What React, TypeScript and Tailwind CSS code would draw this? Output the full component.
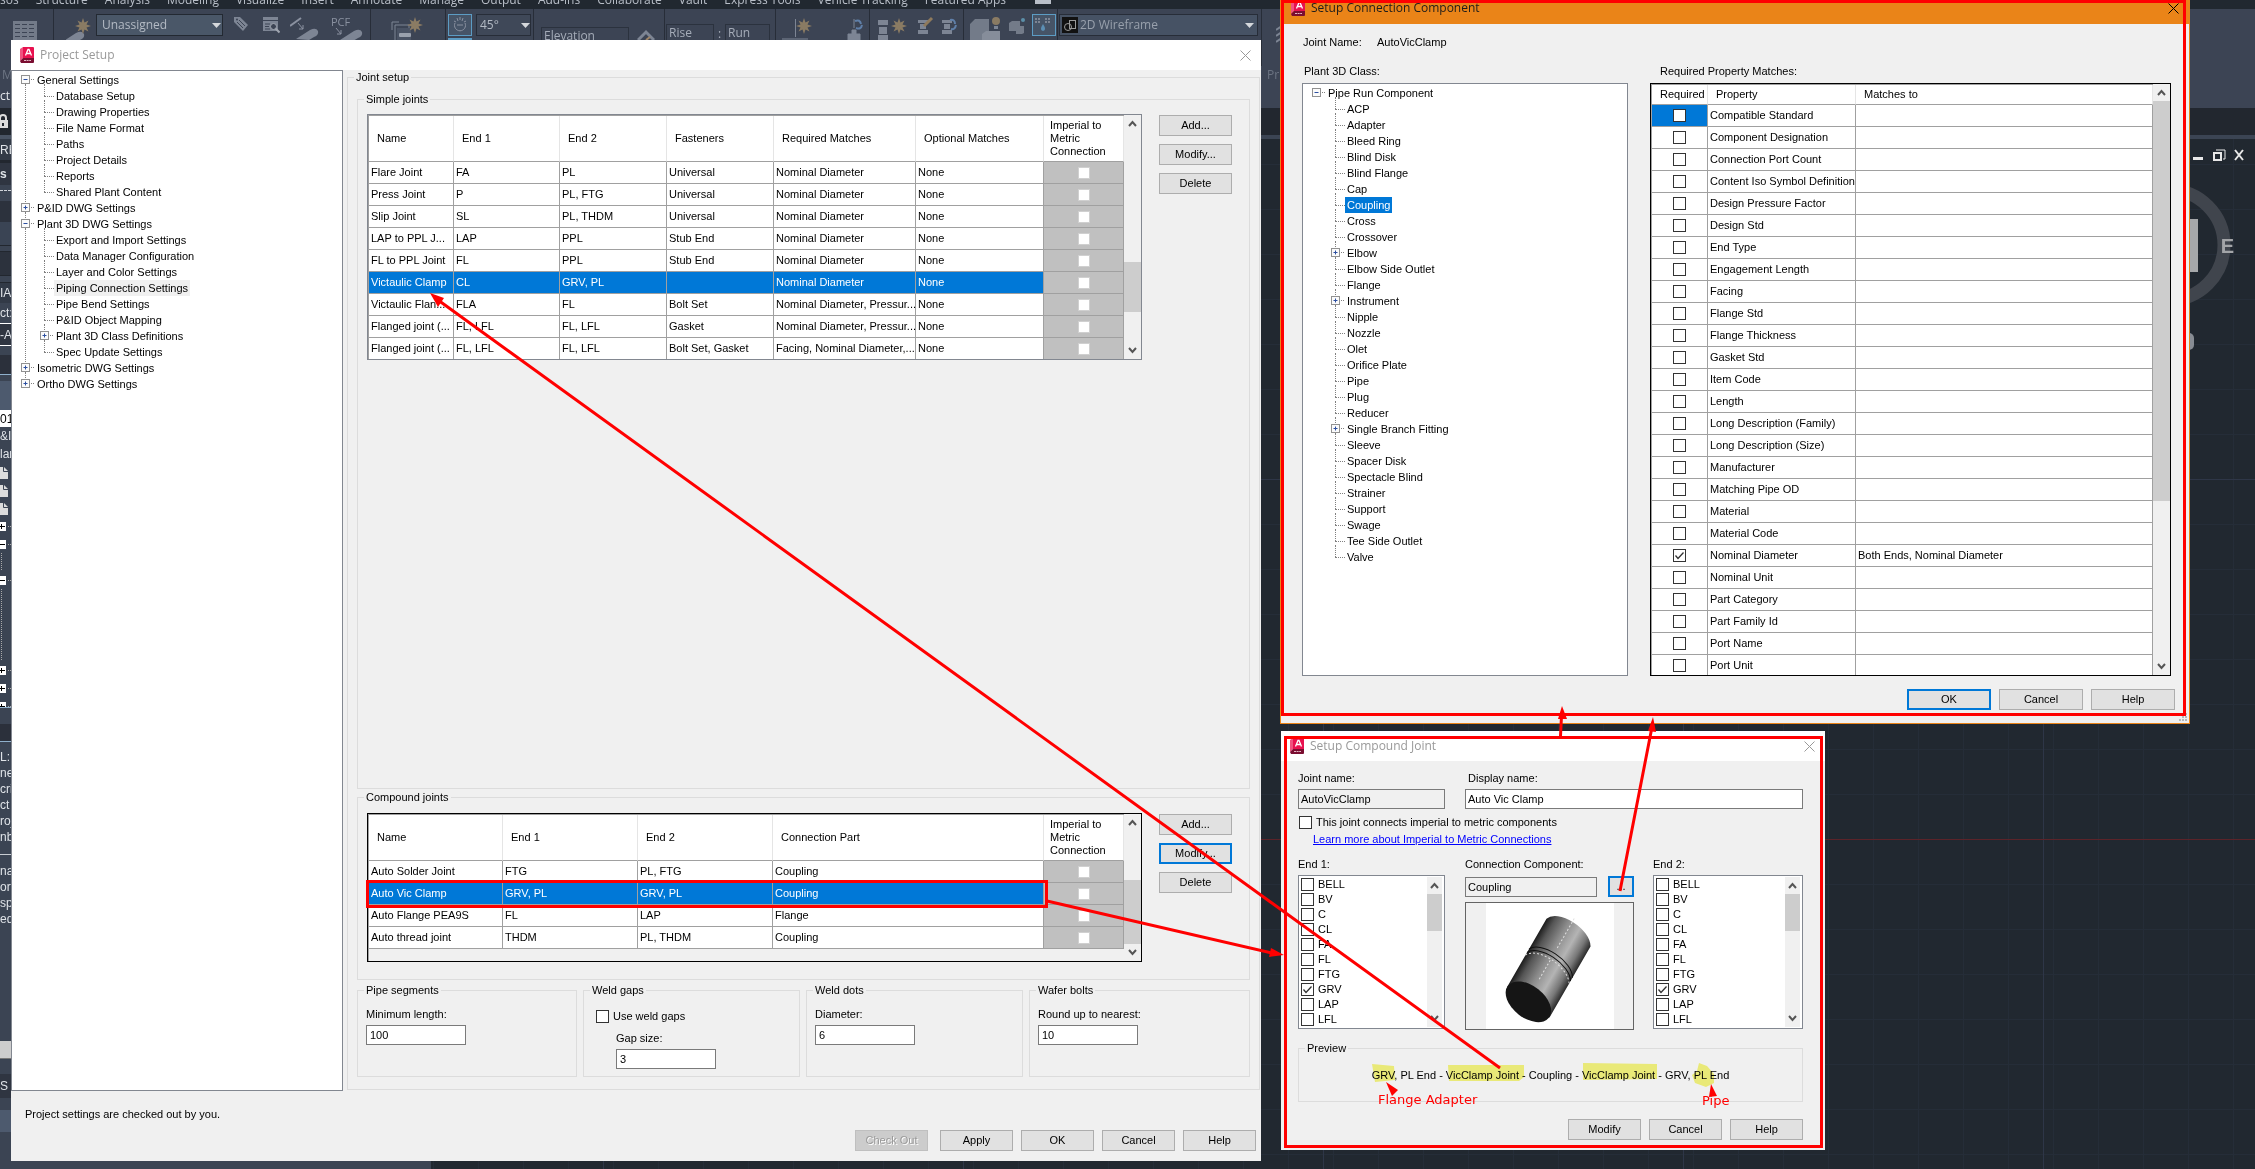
import React, { useState } from "react";
import clsx from "clsx";

type TreeNode = {
  label: string;
  children?: TreeNode[];
  open?: boolean;
  expandable?: boolean;
};

const MENU = [
  "sos",
  "Structure",
  "Analysis",
  "Modeling",
  "Visualize",
  "Insert",
  "Annotate",
  "Manage",
  "Output",
  "Add-ins",
  "Collaborate",
  "Vault",
  "Express Tools",
  "Vehicle Tracking",
  "Featured Apps",
];

const SETTINGS_TREE: TreeNode[] = [
  {
    label: "General Settings",
    expandable: true,
    open: true,
    children: [
      { label: "Database Setup" },
      { label: "Drawing Properties" },
      { label: "File Name Format" },
      { label: "Paths" },
      { label: "Project Details" },
      { label: "Reports" },
      { label: "Shared Plant Content" },
    ],
  },
  { label: "P&ID DWG Settings", expandable: true },
  {
    label: "Plant 3D DWG Settings",
    expandable: true,
    open: true,
    children: [
      { label: "Export and Import Settings" },
      { label: "Data Manager Configuration" },
      { label: "Layer and Color Settings" },
      { label: "Piping Connection Settings" },
      { label: "Pipe Bend Settings" },
      { label: "P&ID Object Mapping" },
      { label: "Plant 3D Class Definitions", expandable: true },
      { label: "Spec Update Settings" },
    ],
  },
  { label: "Isometric DWG Settings", expandable: true },
  { label: "Ortho DWG Settings", expandable: true },
];

const CLASS_TREE: TreeNode[] = [
  {
    label: "Pipe Run Component",
    expandable: true,
    open: true,
    children: [
      { label: "ACP" },
      { label: "Adapter" },
      { label: "Bleed Ring" },
      { label: "Blind Disk" },
      { label: "Blind Flange" },
      { label: "Cap" },
      { label: "Coupling" },
      { label: "Cross" },
      { label: "Crossover" },
      { label: "Elbow", expandable: true },
      { label: "Elbow Side Outlet" },
      { label: "Flange" },
      { label: "Instrument", expandable: true },
      { label: "Nipple" },
      { label: "Nozzle" },
      { label: "Olet" },
      { label: "Orifice Plate" },
      { label: "Pipe" },
      { label: "Plug" },
      { label: "Reducer" },
      { label: "Single Branch Fitting", expandable: true },
      { label: "Sleeve" },
      { label: "Spacer Disk" },
      { label: "Spectacle Blind" },
      { label: "Strainer" },
      { label: "Support" },
      { label: "Swage" },
      { label: "Tee Side Outlet" },
      { label: "Valve" },
    ],
  },
];

const SIMPLE_JOINTS = [
  ["Flare Joint", "FA", "PL", "Universal", "Nominal Diameter", "None"],
  ["Press Joint", "P", "PL, FTG", "Universal", "Nominal Diameter", "None"],
  ["Slip Joint", "SL", "PL, THDM", "Universal", "Nominal Diameter", "None"],
  ["LAP to PPL J...", "LAP", "PPL", "Stub End", "Nominal Diameter", "None"],
  ["FL to PPL Joint", "FL", "PPL", "Stub End", "Nominal Diameter", "None"],
  ["Victaulic Clamp", "CL", "GRV, PL", "", "Nominal Diameter", "None"],
  ["Victaulic Flan...", "FLA", "FL", "Bolt Set", "Nominal Diameter, Pressur...", "None"],
  ["Flanged joint (...", "FL, LFL", "FL, LFL", "Gasket", "Nominal Diameter, Pressur...", "None"],
  ["Flanged joint (...", "FL, LFL", "FL, LFL", "Bolt Set, Gasket", "Facing, Nominal Diameter,...", "None"],
];

const COMPOUND_JOINTS = [
  ["Auto Solder Joint", "FTG", "PL, FTG", "Coupling"],
  ["Auto Vic Clamp", "GRV, PL", "GRV, PL", "Coupling"],
  ["Auto Flange PEA9S", "FL", "LAP", "Flange"],
  ["Auto thread joint", "THDM", "PL, THDM", "Coupling"],
];

const PROPERTIES = [
  "Compatible Standard",
  "Component Designation",
  "Connection Port Count",
  "Content Iso Symbol Definition",
  "Design Pressure Factor",
  "Design Std",
  "End Type",
  "Engagement Length",
  "Facing",
  "Flange Std",
  "Flange Thickness",
  "Gasket Std",
  "Item Code",
  "Length",
  "Long Description (Family)",
  "Long Description (Size)",
  "Manufacturer",
  "Matching Pipe OD",
  "Material",
  "Material Code",
  "Nominal Diameter",
  "Nominal Unit",
  "Part Category",
  "Part Family Id",
  "Port Name",
  "Port Unit",
];

const END_TYPES = ["BELL", "BV", "C", "CL", "FA", "FL", "FTG", "GRV", "LAP", "LFL"];

// slices of the palettes docked on the left edge
const PALETTE = [
  { cls: "h-[27px] bg-[#22272f]", icon: "lock" },
  { cls: "h-1 bg-[#4a5464]" },
  { cls: "h-[21px] bg-[#323a47]", text: "RE(" },
  { cls: "h-[3px] bg-[#22272f]" },
  { cls: "h-[22px] bg-[#2f3541] font-bold", text: "s" },
  { cls: "h-[6px] border-b border-dashed border-[#d0d4da] bg-[#3b4453]" },
  { cls: "h-[10px] bg-[#3b4453]" },
  { cls: "h-[21px] bg-[#2c323d]" },
  { cls: "h-[23px] bg-[#3a4454]" },
  { cls: "h-[7px] border-y border-[#22272f] bg-[#3b4453]" },
  { cls: "h-[23px] bg-[#2c323d]" },
  { cls: "h-[8px] border-y border-[#22272f] bg-[#3b4453]" },
  { cls: "h-[20px] bg-[#323a47]", text: "IAI" },
  { cls: "h-[20px] bg-[#3b4453]", text: "ct:" },
  { cls: "h-[23px] border-y border-white bg-[#2f3541]", text: "-A" },
  { cls: "h-[9px] bg-[#3b4453]" },
  { cls: "h-[20px] border-b border-[#8fb0cc] bg-[#2b303b]" },
  { cls: "h-[6px] bg-[#3b4453]" },
  { cls: "h-[29px] bg-[#4d5a6e]" },
  { cls: "h-[17px] bg-white text-black", text: "01" },
  { cls: "h-[18px]", text: "&I" },
  { cls: "h-[18px]", text: "lar" },
  { cls: "h-[18px]", icon: "doc" },
  { cls: "h-[18px]", icon: "doc" },
  { cls: "h-[18px]", icon: "doc" },
  { cls: "h-[18px]", icon: "plus" },
  { cls: "h-[18px]", icon: "minus" },
  { cls: "h-[18px]", icon: "line" },
  { cls: "h-[18px]", icon: "minus" },
  { cls: "h-[72px]", icon: "line" },
  { cls: "h-[18px]", icon: "plus" },
  { cls: "h-[18px]", icon: "plus" },
  { cls: "h-[11px] border-b border-[#8fb0cc]", icon: "plus" },
  { cls: "h-[16px] bg-[#3b4453]" },
  { cls: "h-[18px] border-b border-[#8fb0cc] bg-[#2b303b]" },
  { cls: "h-[7px]" },
  { cls: "h-4", text: "L:" },
  { cls: "h-4", text: "ne:" },
  { cls: "h-4", text: "cri" },
  { cls: "h-4", text: "ct" },
  { cls: "h-4", text: "roj" },
  { cls: "h-4", text: "nb" },
  { cls: "h-[10px] border-b border-[#c8ccd2]" },
  { cls: "h-[8px]" },
  { cls: "h-4", text: "na" },
  { cls: "h-4", text: "or" },
  { cls: "h-4", text: "sp" },
  { cls: "h-4", text: "ed" },
  { cls: "h-[114px]" },
  { cls: "h-[18px] border-b border-[#777] bg-[#cdcdcd]" },
  { cls: "h-[15px]" },
  { cls: "h-[24px] bg-[#2f3541]", text: "S" },
  { cls: "h-[12px]" },
  { cls: "h-[22px] bg-[#4d5a6e]" },
];

const PaletteIcon = ({ kind }: { kind: string }) => (
  <svg className="h-full w-[11px] shrink-0">
    {kind === "lock" && (
      <g>
        <path d="M0 13v-3a3 3 0 0 1 6 0v3" fill="none" stroke="#dcdcdc" strokeWidth="2" />
        <rect x="-2" y="12" width="10" height="8" fill="#dcdcdc" />
        <rect x="2" y="15" width="2" height="3" fill="#22272f" />
      </g>
    )}
    {kind === "doc" && (
      <g>
        <path d="M0 4h4l4 4v8H0z" fill="#dcdcdc" />
        <path d="M3.500 4v4.500H8" fill="none" stroke="#3b4453" />
      </g>
    )}
    {(kind === "plus" || kind === "minus") && (
      <g>
        <rect x="-3" y="5" width="9" height="9" fill="#fff" />
        <path d="M0 9.500h5" stroke="#000" />
        {kind === "plus" && <path d="M1.500 7v5" stroke="#000" />}
        <path d="M8 9.500h3" stroke="#aaa" strokeDasharray="1 1" />
      </g>
    )}
    {kind === "line" && <path d="M1.500 0V90" stroke="#aaa" strokeDasharray="1 1" />}
  </svg>
);

const Star = ({ x, y }: { x: number; y: number }) => (
  <path
    transform={`translate(${x} ${y})`}
    d="M0-8 1.500-3.500 5.500-5.500 3.500-1.500 8 0 3.500 1.500 5.500 5.500 1.500 3.500 0 8-1.500 3.500-5.500 5.500-3.500 1.500-8 0-3.500-1.500-5.500-5.500-1.500-3.500z"
    fill="#8a7b63"
  />
);

const PipeEnd = ({ x, y }: { x: number; y: number }) => (
  <path transform={`translate(${x} ${y})`} d="M0 10 14 1q6-3 8 1 1 4-4 6l-5 3z" fill="#7d8594" />
);

const RibbonGroup = ({ className, children }: { className: string; children?: React.ReactNode }) => (
  <div className={clsx("flex shrink-0 items-start border-r border-[#272d38] pt-[5px]", className)}>{children}</div>
);

const Ribbon = () => (
  <div className="flex h-[99px] flex-col bg-[#3c4454]">
    <div className="flex h-[57px]">
      <RibbonGroup className="w-[54px] pl-[13px]">
        <svg width="24" height="26">
          <rect y="7" width="24" height="19" fill="#737b89" />
          <path d="M2 10.500h20M2 14.500h20M2 18.500h20M2 22.500h20" stroke="#3c4454" strokeDasharray="5 2" />
        </svg>
      </RibbonGroup>
      <RibbonGroup className="w-[317px] pl-3">
        <svg width="26" height="26">
          <PipeEnd x={-4} y={18} />
          <Star x={17} y={12} />
        </svg>
        <label className="sr-only" htmlFor="line-no">
          Line number
        </label>
        <div className="relative ml-1">
          <select
            id="line-no"
            className="block h-[22px] w-[127px] appearance-none border border-[#232932] bg-[#4a5768] pl-[5px] font-['Open_Sans',sans-serif] text-xs text-[#b3bac4]"
          >
            <option>Unassigned</option>
          </select>
          <svg className="absolute top-[9px] right-[2px]" width="9" height="5">
            <path d="M0 0h9L4.500 5z" fill="#d5d8dc" />
          </svg>
        </div>
        <svg className="ml-[10px]" width="16" height="20">
          <path d="M1 3h6l8 8-5 6L1 8z" fill="#7d8594" />
          <path d="M6 6l6 6M4 8l6 6" stroke="#3c4454" />
          <circle cx="4" cy="5.500" r="1" fill="#3c4454" />
        </svg>
        <svg className="ml-[14px]" width="17" height="20">
          <path d="M0 3h15v3H0zM0 7h15v10H0z" fill="#7d8594" />
          <path d="M2 10h5M2 12.500h4M2 15h5" stroke="#3c4454" />
          <circle cx="10.500" cy="12.500" r="3" fill="#3c4454" stroke="#a0a6b0" />
          <path d="M12.500 14.500l4 4" stroke="#a0a6b0" strokeWidth="2" />
        </svg>
        <svg className="ml-[10px]" width="30" height="26">
          <path d="M0 12 11 4" stroke="#8a91a0" strokeWidth="2" />
          <path d="M8 9l5 6m0-4v4h-4" stroke="#8a91a0" fill="none" />
          <PipeEnd x={6} y={15} />
        </svg>
        <div className="relative ml-[11px] w-[34px]">
          <span className="block pt-px font-['Open_Sans',sans-serif] text-[11px] leading-[13px] text-[#8a91a0]">PCF</span>
          <svg className="block" width="34" height="14">
            <path d="M5 0l5 6m0-4v4h-4" stroke="#8a91a0" fill="none" />
            <PipeEnd x={9} y={2} />
          </svg>
        </div>
      </RibbonGroup>
      <RibbonGroup className="w-[75px] pl-[20px]">
        <svg width="34" height="26">
          <path d="M1 16V8h7M4 26V11h14v15" fill="none" stroke="#7d8594" />
          <rect x="6" y="14" width="14" height="12" fill="#4a5364" />
          <rect x="8" y="19" width="12" height="4" rx="1" fill="#9aa1ad" />
          <Star x={24} y={11} />
        </svg>
      </RibbonGroup>
      <RibbonGroup className="w-[88px] gap-1 pl-[2px]">
        <div className="flex flex-col gap-[2px]">
          <button
            type="button"
            aria-label="Pipe slope"
            className="flex h-[22px] w-6 items-center justify-center border border-[#5c9cc4] bg-[#465467]"
          >
            <svg width="16" height="16" fill="none" stroke="#8a91a0">
              <path d="M3 6a5.500 5.500 0 1 0 10 0M5 8h6" />
              <path d="M2 4l2 1M5 1l1 3M8 0v3M11 1l-1 3M14 4l-2 1" />
            </svg>
          </button>
          <div className="h-1 w-6 bg-[#5c9cc4]" />
        </div>
        <label className="sr-only" htmlFor="angle">
          Angle
        </label>
        <div className="relative">
          <select
            id="angle"
            className="block h-[22px] w-[55px] appearance-none border border-[#272d38] bg-[#3f4858] pl-[3px] font-['Open_Sans',sans-serif] text-xs text-[#b3bac4]"
          >
            <option>45°</option>
          </select>
          <svg className="absolute top-[9px] right-[1px]" width="9" height="5">
            <path d="M0 0h9L4.500 5z" fill="#d5d8dc" />
          </svg>
        </div>
      </RibbonGroup>
      <RibbonGroup className="w-[131px] gap-2 pl-[7px]">
        <div className="mt-[13px] h-5 w-[88px] border border-[#2b323e] pl-[2px] font-['Open_Sans',sans-serif] text-xs leading-4 text-[#a5acb8]">
          Elevation
        </div>
        <svg width="18" height="26">
          <path d="M1 26 9 18l8 8" fill="none" stroke="#7d8594" strokeWidth="3" />
          <path d="M9 26l4-3" stroke="#a08668" strokeWidth="2" />
        </svg>
      </RibbonGroup>
      <RibbonGroup className="w-[111px] font-['Open_Sans',sans-serif] text-xs leading-4 text-[#a5acb8]">
        <div className="mt-[10px] ml-px h-5 w-12 border border-[#2b323e] pl-[2px]">Rise</div>
        <span className="mt-[12px] w-[11px] text-center">:</span>
        <div className="mt-[10px] h-5 w-[45px] border border-[#2b323e] pl-[2px]">Run</div>
      </RibbonGroup>
      <RibbonGroup className="w-[94px] pl-[6px]">
        <svg width="84" height="26">
          <path d="M13.500 5v18M0 25h26" stroke="#7d8594" />
          <Star x={22} y={12} />
          <path d="M66 20h4v-4h4v4h4v6H66zM72 14v-9" fill="#7d8594" stroke="#7d8594" />
          <path d="M73 7q5-2 6 3M80 11q-1 5-6 3" fill="none" stroke="#5f7fa8" strokeWidth="2" />
        </svg>
      </RibbonGroup>
      <RibbonGroup className="w-[94px] pl-[8px]">
        <svg width="84" height="26">
          <path d="M0 6h10v5H0zM1 13h8v7H1zM0 21h10v5H0z" fill="#7d8594" />
          <Star x={21} y={12} />
          <path d="M40 6h10v3H40zM42 10h6v5h-6zM40 16h10v4H40z" fill="#7d8594" />
          <path d="M46 12l8-8" stroke="#8f7a5c" strokeWidth="3" />
          <path d="M64 6h10v3H64zM66 10h6v5h-6zM64 16h10v4H64z" fill="#7d8594" />
          <path d="M72 6q5-1 5 4M78 11q-1 5-5 4" fill="none" stroke="#5f7fa8" strokeWidth="2" />
        </svg>
      </RibbonGroup>
      <RibbonGroup className="w-[94px] gap-[6px] pl-[6px]">
        <svg width="56" height="26">
          <path d="M0 10l5-5h14v12l-5 5v4H0z" fill="#737b89" />
          <path d="M12 20l4-3h14v9H12z" fill="#868d9a" />
          <circle cx="26" cy="7" r="4" fill="#8a7b63" />
          <path d="M24 12h4v3h-4z" fill="#7d8594" />
          <path d="M39 9l3-2h8v7l-2 3h-9zM46 14l3-2h5v7l-2 1h-6z" fill="#737b89" />
          <circle cx="53" cy="6" r="2" fill="#5c8fa8" />
        </svg>
        <button
          type="button"
          aria-label="Toggle visibility"
          className="flex h-[22px] w-6 items-center justify-center border border-[#5c9cc4] bg-[#465467]"
        >
          <svg width="18" height="18">
            <path d="M0 3h6M0 6h6M10 3h6M10 6h6" stroke="#7d8594" strokeWidth="2" strokeDasharray="2 1" />
            <path d="M8 8q4 6 0 7-4-1 0-7z" fill="#5c8fb4" />
          </svg>
        </button>
      </RibbonGroup>
      <RibbonGroup className="w-[204px] pl-[1px]">
        <label className="sr-only" htmlFor="visual-style">
          Visual style
        </label>
        <div className="relative">
          <select
            id="visual-style"
            className="block h-[22px] w-[199px] appearance-none border border-[#272d38] bg-[#465264] pl-[20px] font-['Open_Sans',sans-serif] text-xs text-[#98a0ac]"
          >
            <option>2D Wireframe</option>
          </select>
          <svg className="absolute top-[3px] left-[3px]" width="16" height="16">
            <rect width="16" height="16" fill="#111" />
            <circle cx="6" cy="10" r="3.500" fill="none" stroke="#999" />
            <rect x="7.500" y="3.500" width="6" height="8" fill="none" stroke="#999" />
          </svg>
          <svg className="absolute top-[9px] right-[4px]" width="9" height="5">
            <path d="M0 0h9L4.500 5z" fill="#d5d8dc" />
          </svg>
        </div>
      </RibbonGroup>
      <svg className="mt-4 ml-[14px]" width="14" height="18" fill="none" stroke="#7d8594" strokeWidth="2">
        <path d="M0 5l6-4 6 4M0 11l6-4 6 4M0 17l6-4 6 4" />
      </svg>
    </div>
    <div className="flex h-[18px] items-center font-['Open_Sans',sans-serif] text-xs text-[#6d7583]">
      <span className="w-[1267px] pl-[2px]">M</span>
      <span>Pr</span>
    </div>
    <div className="flex h-6 items-center font-['Open_Sans',sans-serif] text-xs text-[#e3e6ea]">
      <span>ct</span>
    </div>
  </div>
);

const ModelSpace = () => (
  <div className="relative flex-1">
    <svg className="absolute inset-0 h-full w-full">
      <defs>
        <pattern id="minor" width="45" height="45" x="17" y="25" patternUnits="userSpaceOnUse">
          <path d="M.5 0V45M0 .5H45" stroke="#252d38" />
        </pattern>
        <pattern id="major" width="360" height="360" x="232" y="340" patternUnits="userSpaceOnUse">
          <path d="M.5 0V360M0 .5H360" stroke="#2e3647" />
        </pattern>
      </defs>
      <rect width="100%" height="100%" fill="url(#minor)" />
      <rect width="100%" height="100%" fill="url(#major)" />
      <path d="M0 700.500H2255" stroke="#5b2329" />
    </svg>
    {/* view cube */}
    <svg className="absolute top-[44px] right-2" width="160" height="180">
      <circle cx="82" cy="62" r="55" fill="none" stroke="#40454d" strokeWidth="13" />
      <rect x="40" y="36" width="71" height="53" fill="#a6a8aa" />
      <rect x="80" y="150" width="27" height="17" rx="5" fill="#878c93" />
    </svg>
    <span className="absolute top-[95px] right-[21px] font-['Liberation_Sans',sans-serif] text-xl leading-6 font-bold text-[#a3a5a8]">
      E
    </span>
    <svg className="absolute top-[9px] right-[9px]" width="54" height="14">
      <path d="M1 9h10v3H1z" fill="#e8e8e8" />
      <path d="M24 2h9v9h-2" fill="none" stroke="#e8e8e8" />
      <rect x="22" y="5" width="7" height="7" fill="#212830" stroke="#e8e8e8" strokeWidth="2" />
      <path d="M43 2l8 10M51 2l-8 10" stroke="#e8e8e8" strokeWidth="2" />
    </svg>
  </div>
);

const AppIcon = () => (
  <svg className="shrink-0" width="14" height="16" viewBox="0 0 14 16">
    <path d="M3 0h10a1 1 0 0 1 1 1v10H3z" fill="#e8114f" />
    <path d="M0 2 3 0v11l-3 3z" fill="#f0527f" />
    <path d="M0 14l3-3h11v4a1 1 0 0 1-1 1H1z" fill="#7a0d30" />
    <path d="M5.500 8.500 8 2.500h1l2.500 6M6.500 6.500h4" fill="none" stroke="#fff" strokeWidth="1.300" />
    <path d="M4 13.500h7" stroke="#e3b8c5" strokeDasharray="2 .6" />
  </svg>
);

const CloseIcon = () => (
  <svg width="11" height="11" viewBox="0 0 11 11">
    <path d="M.5.5l10 10M10.500.5l-10 10" stroke="currentColor" strokeWidth="1" />
  </svg>
);

const Button = ({
  children,
  className,
  focused,
  disabled,
}: {
  children: React.ReactNode;
  className?: string;
  focused?: boolean;
  disabled?: boolean;
}) => (
  <button
    type="button"
    disabled={disabled}
    className={clsx(
      "h-[21px] shrink-0 text-center",
      focused ? "border-2 border-[#0078d7] leading-[15px]" : "border leading-[17px]",
      !focused && !disabled && "border-[#adadad]",
      disabled ? "border-[#bfbfbf] bg-[#cccccc] text-[#9a9a9a]" : "bg-[#e1e1e1]",
      className ?? "w-[73px]"
    )}
  >
    {children}
  </button>
);

const CheckBox = ({
  checked = false,
  id,
  label,
  pale,
}: {
  checked?: boolean;
  id?: string;
  label?: string;
  pale?: boolean;
}) => {
  const [on, setOn] = useState<boolean>(checked);
  return (
    <span className={clsx("relative inline-block shrink-0 align-middle", pale ? "h-3 w-3" : "h-[13px] w-[13px]")}>
      <input
        type="checkbox"
        id={id}
        aria-label={label}
        checked={on}
        onChange={() => setOn(!on)}
        className={clsx(
          "block h-full w-full appearance-none border bg-white",
          pale ? "border-[#d0d0d0]" : "border-[#333333]"
        )}
      />
      {on && (
        <svg className="pointer-events-none absolute inset-0" width="13" height="13">
          <path d="M2.500 6.500 5 9.500l5.500-6" fill="none" stroke="#333" strokeWidth="1.300" />
        </svg>
      )}
    </span>
  );
};

const ScrollBar = ({ thumb, width = "w-[17px]" }: { thumb: string; width?: string }) => (
  <div className={clsx("flex shrink-0 flex-col bg-[#f0f0f0]", width)}>
    <svg className="mx-auto h-[17px] shrink-0" width="11" height="17">
      <path d="M2 11l3.500-4L9 11" fill="none" stroke="#555" strokeWidth="2" />
    </svg>
    <div className="flex-1">
      <div className={clsx("mx-auto w-full bg-[#cdcdcd]", thumb)} />
    </div>
    <svg className="mx-auto h-[17px] shrink-0" width="11" height="17">
      <path d="M2 6l3.500 4L9 6" fill="none" stroke="#555" strokeWidth="2" />
    </svg>
  </div>
);

const Group = ({
  title,
  className,
  inner,
  children,
}: {
  title: string;
  className?: string;
  inner?: string;
  children: React.ReactNode;
}) => (
  <fieldset className={clsx("flex min-w-0 flex-col border border-[#dcdcdc]", className)}>
    <legend className="ml-[6px] px-[2px] leading-[14px]">{title}</legend>
    <div className={clsx("flex-1", inner)}>{children}</div>
  </fieldset>
);

const Expander = ({ open }: { open?: boolean }) => (
  <svg className="shrink-0" width="14" height="16" fill="none">
    <rect x=".5" y="3.500" width="8" height="8" fill="#fbfbfb" stroke="#919191" />
    <path d="M2.500 7.500h4" stroke="#2c4fa0" />
    {!open && <path d="M4.500 5.500v4" stroke="#2c4fa0" />}
    <path d="M10 7.500h4" stroke="#808080" strokeDasharray="1 1" />
  </svg>
);

const TreeItem = ({
  node,
  last,
  root,
  selected,
  selectedClass,
}: {
  node: TreeNode;
  last: boolean;
  root: boolean;
  selected: string;
  selectedClass: string;
}) => (
  <li className="relative">
    {!last && <span className="absolute top-3 bottom-[-4px] left-1 border-l border-dotted border-[#808080]" />}
    {!root && <span className="absolute top-[-4px] left-1 h-3 border-l border-dotted border-[#808080]" />}
    <div className="relative flex h-4 items-center whitespace-nowrap">
      {node.expandable ? (
        <Expander open={node.open} />
      ) : (
        <span className="ml-1 w-[10px] border-t border-dotted border-[#808080]" />
      )}
      <span className={clsx("px-[2px] leading-4", node.label === selected && selectedClass)}>{node.label}</span>
    </div>
    {node.children && (
      <ul className="pl-[19px]">
        {node.children.map((child, i) => (
          <TreeItem
            key={child.label}
            node={child}
            last={i === node.children!.length - 1}
            root={false}
            selected={selected}
            selectedClass={selectedClass}
          />
        ))}
      </ul>
    )}
  </li>
);

const Tree = ({
  nodes,
  selected,
  selectedClass,
  className,
}: {
  nodes: TreeNode[];
  selected: string;
  selectedClass: string;
  className: string;
}) => (
  <ul className={clsx("border border-[#828790] bg-white", className)}>
    {nodes.map((node, i) => (
      <TreeItem
        key={node.label}
        node={node}
        last={i === nodes.length - 1}
        root
        selected={selected}
        selectedClass={selectedClass}
      />
    ))}
  </ul>
);

const TH = "border-r border-b border-r-[#e5e5e5] border-b-[#a0a0a0] bg-white pl-2 text-left font-normal";
const TD = "h-[22px] border-r border-b border-[#a0a0a0] pl-[2px] whitespace-nowrap";

const JointTable = ({
  columns,
  widths,
  rows,
  selected,
  frame,
  thumb,
}: {
  columns: string[];
  widths: string[];
  rows: string[][];
  selected: number;
  frame: string;
  thumb: string;
}) => (
  <div className={clsx("flex min-w-0 flex-1 overflow-hidden border", frame)}>
    <div className="min-w-0 flex-1 border-t border-l border-[#a0a0a0]">
      <table className="w-full table-fixed border-separate border-spacing-0">
        <colgroup>
          {widths.map((w, i) => (
            <col key={i} className={w} />
          ))}
          <col className="w-20" />
        </colgroup>
        <thead>
          <tr className="h-[46px]">
            {columns.map((c) => (
              <th key={c} className={TH}>
                {c}
              </th>
            ))}
            <th className={clsx(TH, "pl-[6px]")}>
              Imperial to
              <br />
              Metric
              <br />
              Connection
            </th>
          </tr>
        </thead>
        <tbody>
          {rows.map((row, r) => (
            <tr key={r} className={r === selected ? "bg-[#0078d7] text-white" : "bg-white"}>
              {row.map((cell, c) => (
                <td key={c} className={TD}>
                  {cell}
                </td>
              ))}
              <td className="h-[22px] border-r border-b border-[#a0a0a0] bg-[#c0c0c0] text-center leading-none">
                <CheckBox pale label={`${row[0]} imperial to metric`} />
              </td>
            </tr>
          ))}
        </tbody>
      </table>
    </div>
    <ScrollBar thumb={thumb} />
  </div>
);

const Field = ({
  id,
  label,
  value,
  className,
}: {
  id: string;
  label: string;
  value: string;
  className?: string;
}) => (
  <div className={clsx("flex w-[100px] flex-col gap-1", className)}>
    <label htmlFor={id} className="leading-[14px] whitespace-nowrap">
      {label}
    </label>
    <input id={id} defaultValue={value} className="h-5 w-full border border-[#7a7a7a] bg-white px-[3px]" />
  </div>
);

const ProjectSetup = () => (
  <section className="absolute top-10 bottom-2 left-[11px] flex w-[1250px] flex-col bg-[#f0f0f0]">
    <header className="flex h-[30px] shrink-0 items-center gap-[6px] bg-white pr-[10px] pl-[9px] font-['Open_Sans',sans-serif] text-xs text-[#999]">
      <AppIcon />
      <h1 className="flex-1">Project Setup</h1>
      <button type="button" aria-label="Close">
        <CloseIcon />
      </button>
    </header>
    <div className="flex min-h-0 flex-1">
      <Tree
        nodes={SETTINGS_TREE}
        selected="Piping Connection Settings"
        selectedClass="bg-[#f0f0f0]"
        className="w-[332px] shrink-0 pt-px pl-[9px]"
      />
      <Group title="Joint setup" className="mr-px mb-px ml-1 flex-1" inner="flex flex-col px-[9px] pb-3">
        <Group title="Simple joints" className="mt-2 flex-1" inner="pt-2 pr-[17px] pl-[9px]">
          <div className="flex gap-[17px]">
            <div className="flex h-[246px] min-w-0 flex-1">
              <JointTable
                columns={["Name", "End 1", "End 2", "Fasteners", "Required Matches", "Optional Matches"]}
                widths={["w-[85px]", "w-[106px]", "w-[107px]", "w-[107px]", "w-[142px]", "w-auto"]}
                rows={SIMPLE_JOINTS}
                selected={5}
                frame="border-[#828790]"
                thumb="mt-[130px] h-[50px]"
              />
            </div>
            <div className="mt-px flex flex-col gap-2">
              <Button>Add...</Button>
              <Button>Modify...</Button>
              <Button>Delete</Button>
            </div>
          </div>
        </Group>
        <Group title="Compound joints" className="mt-px" inner="pt-[9px] pr-[17px] pb-[17px] pl-[9px]">
          <div className="flex gap-[17px]">
            <div className="flex h-[149px] min-w-0 flex-1">
              <JointTable
                columns={["Name", "End 1", "End 2", "Connection Part"]}
                widths={["w-[134px]", "w-[135px]", "w-[135px]", "w-auto"]}
                rows={COMPOUND_JOINTS}
                selected={1}
                frame="border-black"
                thumb="mt-[49px] h-[64px]"
              />
            </div>
            <div className="mt-px flex flex-col gap-2">
              <Button>Add...</Button>
              <Button focused>Modify...</Button>
              <Button>Delete</Button>
            </div>
          </div>
        </Group>
        <div className="mt-[3px] grid grid-cols-[220fr_217fr_217fr_221fr] gap-[6px]">
          <Group title="Pipe segments" className="h-[94px]" inner="pt-[10px] pl-2">
            <Field id="min-length" label="Minimum length:" value="100" />
          </Group>
          <Group title="Weld gaps" className="h-[94px]" inner="pt-[12px] pl-[12px]">
            <div className="flex items-center gap-1">
              <CheckBox id="weld-gaps" />
              <label htmlFor="weld-gaps" className="leading-[14px]">
                Use weld gaps
              </label>
            </div>
            <Field id="gap-size" label="Gap size:" value="3" className="mt-2 ml-5" />
          </Group>
          <Group title="Weld dots" className="h-[94px]" inner="pt-[10px] pl-2">
            <Field id="diameter" label="Diameter:" value="6" />
          </Group>
          <Group title="Wafer bolts" className="h-[94px]" inner="pt-[10px] pl-2">
            <Field id="round-up" label="Round up to nearest:" value="10" />
          </Group>
        </div>
      </Group>
    </div>
    <footer className="shrink-0 pt-4 pb-[10px]">
      <p className="pl-[14px] leading-[14px]">Project settings are checked out by you.</p>
      <div className="mt-[9px] flex justify-end gap-2 pr-[5px]">
        <Button disabled className="mr-1 w-[73px] [text-shadow:1px_1px_0_#fff]">
          Check Out
        </Button>
        <Button>Apply</Button>
        <Button>OK</Button>
        <Button>Cancel</Button>
        <Button>Help</Button>
      </div>
    </footer>
  </section>
);

const ConnectionComponent = () => (
  <section className="absolute top-0 left-[1280px] flex w-[910px] flex-col border border-t-0 border-[#ea8418] bg-[#f0f0f0]">
    <header className="flex h-6 items-start gap-[6px] bg-[#ea8418] pr-[10px] pl-[10px] font-['Open_Sans',sans-serif] text-xs leading-4 text-[#1c1c1c]">
      <AppIcon />
      <h2 className="flex-1">Setup Connection Component</h2>
      <button type="button" aria-label="Close" className="h-4 text-black">
        <CloseIcon />
      </button>
    </header>
    <div className="flex gap-[22px] pt-[11px] pl-[22px] leading-[14px]">
      <span className="w-[52px] whitespace-nowrap">Joint Name:</span>
      <span>AutoVicClamp</span>
    </div>
    <div className="mt-[15px] flex gap-[22px] pr-[18px] pl-[21px]">
      <div className="flex w-[326px] flex-col gap-[5px]">
        <h3 className="pl-[2px] leading-[14px]">Plant 3D Class:</h3>
        <Tree
          nodes={CLASS_TREE}
          selected="Coupling"
          selectedClass="bg-[#0078d7] text-white"
          className="flex-1 pt-px pl-[9px]"
        />
      </div>
      <div className="flex flex-1 flex-col gap-[5px]">
        <h3 className="pl-[10px] leading-[14px]">Required Property Matches:</h3>
        <div className="flex h-[593px] overflow-hidden border border-black">
          <div className="min-w-0 flex-1 border-t border-l border-[#a0a0a0]">
            <table className="w-full table-fixed border-separate border-spacing-0">
              <colgroup>
                <col className="w-14" />
                <col className="w-[148px]" />
                <col />
              </colgroup>
              <thead>
                <tr className="h-5">
                  <th className={TH}>Required</th>
                  <th className={TH}>Property</th>
                  <th className={TH}>Matches to</th>
                </tr>
              </thead>
              <tbody>
                {PROPERTIES.map((name, i) => (
                  <tr key={name} className="bg-white">
                    <td
                      className={clsx(
                        "h-[22px] border-r border-b border-[#a0a0a0] text-center leading-none",
                        i === 0 && "bg-[#0078d7]"
                      )}
                    >
                      <CheckBox checked={name === "Nominal Diameter"} label={name} />
                    </td>
                    <td className={TD}>{name}</td>
                    <td className={TD}>{name === "Nominal Diameter" && "Both Ends, Nominal Diameter"}</td>
                  </tr>
                ))}
              </tbody>
            </table>
          </div>
          <ScrollBar thumb="h-[400px]" />
        </div>
      </div>
    </div>
    <footer className="mt-[13px] flex justify-end gap-2 pr-[14px] pb-[13px]">
      <Button focused className="w-[84px]">
        OK
      </Button>
      <Button className="w-[84px]">Cancel</Button>
      <Button className="w-[84px]">Help</Button>
    </footer>
    <svg className="absolute right-[2px] bottom-[2px]" width="8" height="8" fill="#b8b8b8">
      <path d="M6 0h2v2H6zM3 3h2v2H3zM6 3h2v2H6zM0 6h2v2H0zM3 6h2v2H3zM6 6h2v2H6z" />
    </svg>
  </section>
);

const EndList = ({ title, className }: { title: string; className: string }) => (
  <div className={clsx("flex flex-col gap-1", className)}>
    <h3 className="leading-[14px]">{title}</h3>
    <div className="flex h-[154px] overflow-hidden border border-[#828790] bg-white px-[2px] py-px">
      <ul className="flex-1">
        {END_TYPES.map((end) => (
          <li key={end} className="flex h-[15px] items-center gap-1">
            <CheckBox id={`${title}-${end}`} checked={end === "GRV"} />
            <label htmlFor={`${title}-${end}`} className="leading-[15px]">
              {end}
            </label>
          </li>
        ))}
      </ul>
      <ScrollBar thumb="h-[37px]" width="w-[15px]" />
    </div>
  </div>
);

const CouplingImage = () => (
  <svg width="128" height="126" viewBox="0 0 128 126">
    <defs>
      <linearGradient id="steel" x1="0" x2="1" y1="0" y2="0">
        <stop offset="0" stopColor="#1c1c1c" />
        <stop offset=".15" stopColor="#555" />
        <stop offset=".4" stopColor="#8c8c8c" />
        <stop offset=".65" stopColor="#b4b4b4" />
        <stop offset=".85" stopColor="#777" />
        <stop offset="1" stopColor="#2a2a2a" />
      </linearGradient>
    </defs>
    <rect width="128" height="126" fill="#fff" />
    <g transform="translate(43 98) rotate(30)">
      <path d="M-26-1V-80A27 15 6 0 1 26-78V4z" fill="url(#steel)" />
      <path d="M-26-41A27 14 6 0 1 26-38M-26-45A27 14 6 0 1 26-42" fill="none" stroke="#111" />
      <path d="M-26-38A27 14 6 0 1 26-35" fill="none" stroke="#ddd" strokeDasharray="2 2" />
      <path d="M-2-94V-58M-2-46V-22" stroke="#e0e0e0" strokeDasharray="2 2" />
      <ellipse cx="0" cy="1" rx="26" ry="16" transform="rotate(8)" fill="#151515" />
    </g>
  </svg>
);

const CompoundJoint = () => (
  <section className="absolute top-[731px] left-[1281px] w-[544px] bg-[#f0f0f0]">
    <header className="flex h-[30px] items-center gap-[6px] bg-white pr-[10px] pl-[9px] font-['Open_Sans',sans-serif] text-xs text-[#999]">
      <AppIcon />
      <h2 className="flex-1">Setup Compound Joint</h2>
      <button type="button" aria-label="Close">
        <CloseIcon />
      </button>
    </header>
    <div className="pt-[10px] pr-[22px] pb-[10px] pl-[17px]">
      <div className="flex gap-5">
        <div className="flex w-[147px] flex-col gap-1">
          <label htmlFor="joint-name" className="leading-[14px]">
            Joint name:
          </label>
          <input
            id="joint-name"
            readOnly
            value="AutoVicClamp"
            className="h-5 border border-[#7a7a7a] bg-[#f0f0f0] px-[2px]"
          />
        </div>
        <div className="flex flex-1 flex-col gap-1">
          <label htmlFor="display-name" className="pl-[3px] leading-[14px]">
            Display name:
          </label>
          <input
            id="display-name"
            defaultValue="Auto Vic Clamp"
            className="h-5 border border-[#7a7a7a] bg-white px-[2px]"
          />
        </div>
      </div>
      <div className="mt-[6px] flex items-center gap-1 pl-px leading-[14px]">
        <CheckBox id="imperial" />
        <label htmlFor="imperial">This joint connects imperial to metric components</label>
      </div>
      <a href="#" className="mt-[3px] ml-[15px] block w-fit leading-[14px] text-[#0000ff] underline">
        Learn more about Imperial to Metric Connections
      </a>
      <div className="mt-[11px] flex">
        <EndList title="End 1:" className="w-[147px]" />
        <div className="ml-5 flex w-[169px] flex-col gap-[5px]">
          <label htmlFor="component" className="leading-[14px]">
            Connection Component:
          </label>
          <div className="flex items-center justify-between">
            <input
              id="component"
              readOnly
              value="Coupling"
              className="h-5 w-[132px] border border-[#7a7a7a] bg-[#f0f0f0] px-[2px]"
            />
            <Button focused className="w-[26px]">
              ...
            </Button>
          </div>
          <div className="flex h-[128px] justify-center border border-[#646464]">
            <CouplingImage />
          </div>
        </div>
        <EndList title="End 2:" className="ml-auto w-[150px]" />
      </div>
      <Group title="Preview" className="mt-[11px]" inner="pt-[13px] pb-[19px]">
        <p className="text-center leading-[14px]">
          GRV, PL End - VicClamp Joint - Coupling - VicClamp Joint - GRV, PL End
        </p>
      </Group>
      <div className="mt-[17px] flex justify-end gap-2">
        <Button>Modify</Button>
        <Button>Cancel</Button>
        <Button>Help</Button>
      </div>
    </div>
  </section>
);

const Markup = () => (
  <div className="pointer-events-none absolute inset-0">
    <svg className="absolute inset-0 h-full w-full mix-blend-multiply" fill="#f8f880">
      <path d="M1372 1064l22 2 1 14-20 2z" />
      <path d="M1448 1065l76 0 0 12-5 4-70 0z" />
      <path d="M1583 1063l74 1v15l-74 1z" />
      <path d="M1699 1063l8 3 7 8 0 9-8 4-11-4-3-8 5-4z" />
    </svg>
    <svg className="absolute inset-0 h-full w-full" fill="none" stroke="#f00" strokeWidth="3">
      <path d="M1282.500 1.500H2184.500V714.500H1282.500z" />
      <path d="M1285.500 737.500H1821.500V1146.500H1285.500z" />
      <path d="M367.500 881.500H1046.500V906.500H367.500z" />
      <path d="M1500 1068L438 300M1047 901L1272 953M1620 891L1652 727M1560.500 736L1561.500 716" />
      <g fill="#f00" stroke="none">
        <path d="M430 293l14 5-6 9z" />
        <path d="M1284 955l-15 2 2-9z" />
        <path d="M1653 717l3 15-8-1z" />
        <path d="M1562 706l5 13h-9z" />
        <path d="M1386 1082l12 8-6 6z" />
        <path d="M1711 1084l6 12-8 1z" />
      </g>
    </svg>
    <span className="absolute top-[1090px] left-[1378px] font-['DejaVu_Sans',sans-serif] text-[13px] leading-5 text-[#f00]">
      Flange Adapter
    </span>
    <span className="absolute top-[1091px] left-[1702px] font-['DejaVu_Sans',sans-serif] text-[13px] leading-5 text-[#f00]">
      Pipe
    </span>
  </div>
);

const App = () => {
  return (
    <main className="relative flex min-h-screen flex-col overflow-hidden bg-[#212830] font-['Liberation_Sans',Arial,sans-serif] text-[11px] leading-[13px] text-black">
      <nav className="flex h-[9px] items-end gap-[17px] overflow-hidden bg-[#212830] pb-px font-['Open_Sans',sans-serif] text-xs leading-4 text-[#b9bfc8]">
        {MENU.map((item) => (
          <a key={item} href="#" className="shrink-0">
            {item}
          </a>
        ))}
        <span className="ml-3 h-1 w-4 self-start bg-[#b9bfc8]" />
      </nav>
      <Ribbon />
      <div className="flex flex-1">
        <aside className="w-[11px] shrink-0 overflow-hidden bg-[#3b4453] text-xs text-[#dfe3e8]">
          {PALETTE.map((p, i) => (
            <div key={i} className={clsx("flex items-center overflow-hidden whitespace-nowrap", p.cls)}>
              {p.icon ? <PaletteIcon kind={p.icon} /> : p.text}
            </div>
          ))}
        </aside>
        <div className="flex flex-1 flex-col">
          <div className="h-[27px] bg-[#22272f]" />
          <div className="h-1 bg-[#3b4453]" />
          <ModelSpace />
          <div className="absolute bottom-0 left-0 h-2 w-[431px] bg-[#3b4453]" />
        </div>
      </div>
      <ProjectSetup />
      <ConnectionComponent />
      <CompoundJoint />
      <Markup />
    </main>
  );
};

export default App;
